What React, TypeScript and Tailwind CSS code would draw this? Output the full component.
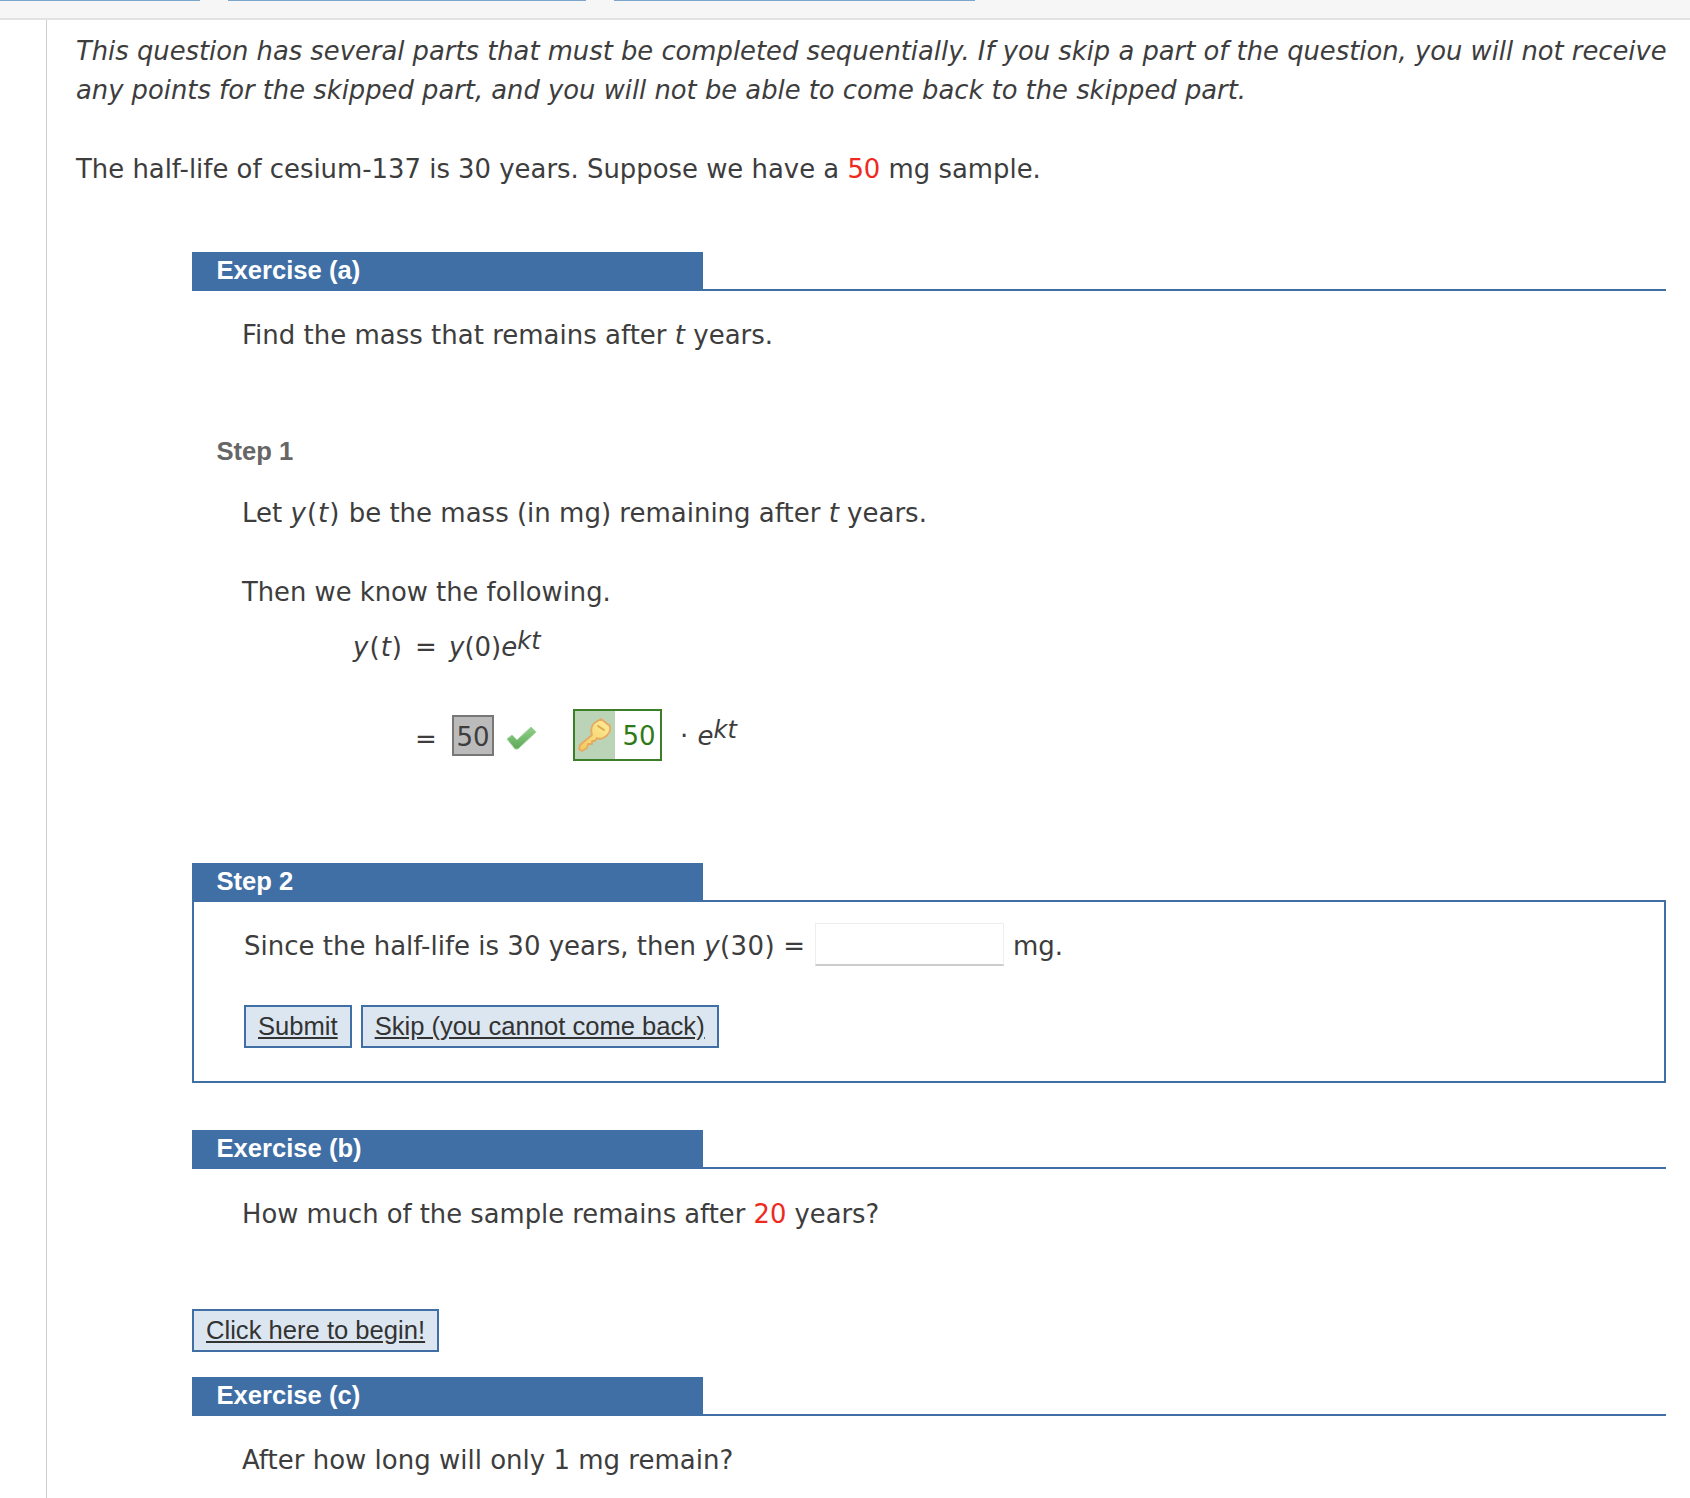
import React from "react";

const sans = "font-['Liberation_Sans',Arial,sans-serif]";

function SectionHeader({ title }: { title: string }) {
  return (
    <div className="ml-[116px] flex h-[39px] border-b-2 border-[#406fa5]">
      <div className={`${sans} w-[511px] h-[39px] bg-[#406fa5] pl-[24.5px] text-[25.6px] leading-[36px] font-bold text-white`}>
        {title}
      </div>
    </div>
  );
}

function KeyIcon() {
  return (
    <svg width="36" height="36" viewBox="0 0 36 36">
      <defs>
        <linearGradient id="keyFill" x1="0" y1="1" x2="1" y2="0">
          <stop offset="0" stopColor="#f2c95c" />
          <stop offset="1" stopColor="#fdee9e" />
        </linearGradient>
      </defs>
      {/* bow top right, shaft and teeth bottom left */}
      <path
        d="M3 28 L15 18 C13 12 15 7 19 5 L24 2 L33 9 C34 14 31 19 26 21 C24 22 22 22 20 21 L18 24 L15 24 L15 27 L11 27 L10 31 L5 34 L2 32 Z"
        fill="url(#keyFill)"
        stroke="#e6a95e"
        strokeWidth="1.8"
        strokeLinejoin="round"
      />
      <path d="M21 9 L27 13" stroke="#d9ac48" strokeWidth="2" strokeLinecap="round" />
    </svg>
  );
}

function CheckIcon() {
  return (
    <svg width="32" height="26" viewBox="0 0 32 26">
      <defs>
        <linearGradient id="checkFill" x1="0" y1="0" x2="0" y2="1">
          <stop offset="0" stopColor="#8fd088" />
          <stop offset="1" stopColor="#5fa85a" />
        </linearGradient>
      </defs>
      <path
        d="M2 14 L7 10 L12 15 L26 2 L31 7 L13 24 L10 24 Z"
        fill="url(#checkFill)"
        stroke="#a5d6a0"
        strokeWidth="1"
        strokeLinejoin="round"
      />
    </svg>
  );
}

function Button({ label }: { label: string }) {
  return (
    <button className={`${sans} h-[43px] border-2 border-[#406fa5] bg-[#dce6f0] px-[12px] pb-[2px] text-[25.6px] leading-[36px] text-[#333] underline`}>
      {label}
    </button>
  );
}

export default function App() {
  return (
    <div className="h-[1498px] w-[1690px] overflow-hidden bg-white font-['DejaVu_Sans',Verdana,sans-serif] text-[26px] leading-[40px] text-[#3d3d3d]">
      {/* top tabs */}
      <div className="flex h-[20px] gap-[28px] border-b-2 border-[#e2e2e2] bg-[#f6f6f6]">
        <div className="h-px w-[200px] bg-[#7ba5cc]" />
        <div className="h-px w-[358px] bg-[#7ba5cc]" />
        <div className="h-px w-[361px] bg-[#7ba5cc]" />
      </div>

      <div className="ml-[46px] h-[1478px] w-[1620px] border-l border-[#cfcfcf] pl-[29px] pt-[12px]">
        <p className="whitespace-nowrap text-[25.8px] leading-[39px] italic">
          This question has several parts that must be completed sequentially. If you skip a part of the question, you will not receive
          <br />
          any points for the skipped part, and you will not be able to come back to the skipped part.
        </p>
        <p className="mt-[39px] text-[25.9px]">
          The half-life of cesium-137 is 30 years. Suppose we have a <span className="text-[#ee2a1e]">50</span> mg sample.
        </p>

        <div className="mt-[63px]">
          <SectionHeader title="Exercise (a)" />
        </div>
        <p className="ml-[166px] mt-[24px]">
          Find the mass that remains after <i>t</i> years.
        </p>

        <div className={`${sans} ml-[140.5px] mt-[76px] text-[25.6px] font-bold text-[#666]`}>Step 1</div>
        <p className="ml-[166px] mt-[22px]">
          Let <span className="tracking-[1px]"><i>y</i>(<i>t</i>)</span> be the mass (in mg) remaining after <i>t</i> years.
        </p>
        <p className="ml-[166px] mt-[39px] text-[25.8px]">Then we know the following.</p>

        {/* equation */}
        <div className="mt-[15px] grid grid-cols-[327px_46px_auto]">
          <div className="text-right tracking-[1px]">
            <i>y</i>(<i>t</i>)
          </div>
          <div className="text-center">=</div>
          <div>
            <i>y</i>(0)<i>e</i>
            <sup className="top-[-7px] text-[24px] italic leading-none">kt</sup>
          </div>

          <div className="col-start-2 mt-[44px] self-center pt-[6px] text-center">=</div>
          <div className="mt-[42px] flex h-[52px] items-center">
            <div className="ml-[3px] flex h-[41px] w-[42px] items-center justify-center border-2 border-[#777] bg-[#bbbbbb] pt-[3px] text-[26px]">
              50
            </div>
            <div className="ml-[11px] mt-[6px]">
              <CheckIcon />
            </div>
            <div className="ml-[36px] flex h-[52px] w-[89px] border-2 border-[#3d7f29]">
              <div className="flex w-[40px] items-center justify-center bg-[#bbd4b8]">
                <KeyIcon />
              </div>
              <div className="flex-1 pl-[3px] pt-[2px] text-center leading-[47px] text-[#2f7a16]">50</div>
            </div>
            <div className="ml-[18px] mt-[2px]">
              · <i className="ml-[1px]">e</i>
              <sup className="top-[-7px] text-[24px] italic leading-none">kt</sup>
            </div>
          </div>
        </div>

        <div className="mt-[102px]">
          <SectionHeader title="Step 2" />
        </div>
        <div className="ml-[116px] h-[181px] border-2 border-t-0 border-[#406fa5] pl-[50px] pt-[21px]">
          <div className="flex h-[43px] items-center">
            <span className="pt-[2px]">
              Since the half-life is 30 years, then <span className="tracking-[0.4px]"><i>y</i>(30)</span> =
            </span>
            <input className="ml-[10px] h-[43px] w-[189px] border border-b-2 border-[#eeeeee] border-b-[#cccccc] bg-white" />
            <span className="ml-[9px] pt-[2px]">mg.</span>
          </div>
          <div className="mt-[39px] flex gap-[9px]">
            <Button label="Submit" />
            <Button label="Skip (you cannot come back)" />
          </div>
        </div>

        <div className="mt-[47px]">
          <SectionHeader title="Exercise (b)" />
        </div>
        <p className="ml-[166px] mt-[25px] text-[25.8px]">
          How much of the sample remains after <span className="text-[#ee2a1e]">20</span> years?
        </p>
        <div className="ml-[116px] mt-[75px]">
          <Button label="Click here to begin!" />
        </div>
        <div className="mt-[25px]">
          <SectionHeader title="Exercise (c)" />
        </div>
        <p className="ml-[166px] mt-[24px]">After how long will only 1 mg remain?</p>
      </div>
    </div>
  );
}
